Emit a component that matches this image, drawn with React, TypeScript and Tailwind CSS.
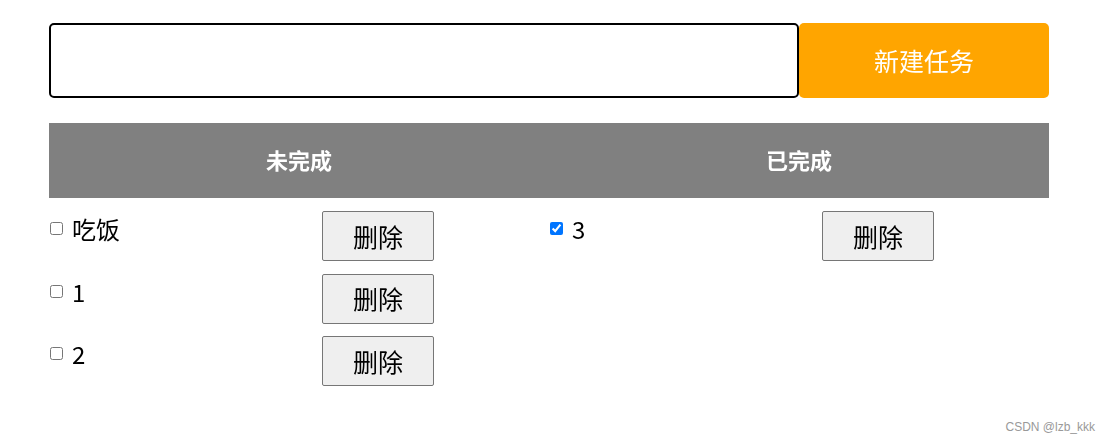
import { useState } from "react";

type Task = { id: number; title: string; done: boolean };

const initialTasks: Task[] = [
  { id: 1, title: "吃饭", done: false },
  { id: 2, title: "1", done: false },
  { id: 3, title: "2", done: false },
  { id: 4, title: "3", done: true },
];

const font = { fontFamily: '"Noto Sans CJK SC", "Noto Sans", sans-serif' };

function TaskRow({
  task,
  onToggle,
  onDelete,
}: {
  task: Task;
  onToggle: () => void;
  onDelete: () => void;
}) {
  return (
    <li className="flex h-[62.5px] items-start">
      <label className="flex w-[273px] items-start pt-[2px] text-[24px] leading-[32px] text-black">
        <input
          type="checkbox"
          checked={task.done}
          onChange={onToggle}
          className="mt-[9px] ml-[1px] mr-[9px] h-[13px] w-[13px] accent-[#0075ff]"
        />
        <span>{task.title}</span>
      </label>
      <button
        type="button"
        onClick={onDelete}
        className="h-[50px] w-[112px] rounded-[2px] border border-[#767676] bg-[#efefef] text-[25px] leading-none text-black"
      >
        删除
      </button>
    </li>
  );
}

export default function App() {
  const [tasks, setTasks] = useState(initialTasks);
  const [text, setText] = useState("");

  const toggle = (id: number) =>
    setTasks((prev) => prev.map((t) => (t.id === id ? { ...t, done: !t.done } : t)));
  const remove = (id: number) => setTasks((prev) => prev.filter((t) => t.id !== id));
  const add = () => {
    if (!text.trim()) return;
    setTasks((prev) => [...prev, { id: Date.now(), title: text.trim(), done: false }]);
    setText("");
  };

  const todo = tasks.filter((t) => !t.done);
  const done = tasks.filter((t) => t.done);

  return (
    <div className="relative h-[444px] w-[1110px] bg-white" style={font}>
      <div className="px-[49px] pt-[23px]">
        <div className="flex h-[75px]">
          <input
            value={text}
            onChange={(e) => setText(e.target.value)}
            autoFocus
            className="h-full w-[750px] rounded-[5px] border-2 border-black px-[2px] text-[24px] outline-none"
          />
          <button
            type="button"
            onClick={add}
            className="h-full w-[250px] rounded-[5px] bg-[#ffa500] text-[25px] text-white"
          >
            新建任务
          </button>
        </div>

        <div className="mt-[25px] grid w-[1000px] grid-cols-2">
          <div className="flex h-[75px] items-center justify-center bg-[#808080] pb-[3px] text-[22px] font-bold text-white">
            未完成
          </div>
          <div className="flex h-[75px] items-center justify-center bg-[#808080] pb-[3px] text-[22px] font-bold text-white">
            已完成
          </div>
          <ul className="mt-[13px]">
            {todo.map((t) => (
              <TaskRow key={t.id} task={t} onToggle={() => toggle(t.id)} onDelete={() => remove(t.id)} />
            ))}
          </ul>
          <ul className="mt-[13px]">
            {done.map((t) => (
              <TaskRow key={t.id} task={t} onToggle={() => toggle(t.id)} onDelete={() => remove(t.id)} />
            ))}
          </ul>
        </div>
      </div>

      <div
        className="absolute right-[15px] bottom-[8px] text-[12px] text-[#999999]"
        style={{ fontFamily: '"Liberation Sans", Arial, sans-serif' }}
      >
        CSDN @lzb_kkk
      </div>
    </div>
  );
}
